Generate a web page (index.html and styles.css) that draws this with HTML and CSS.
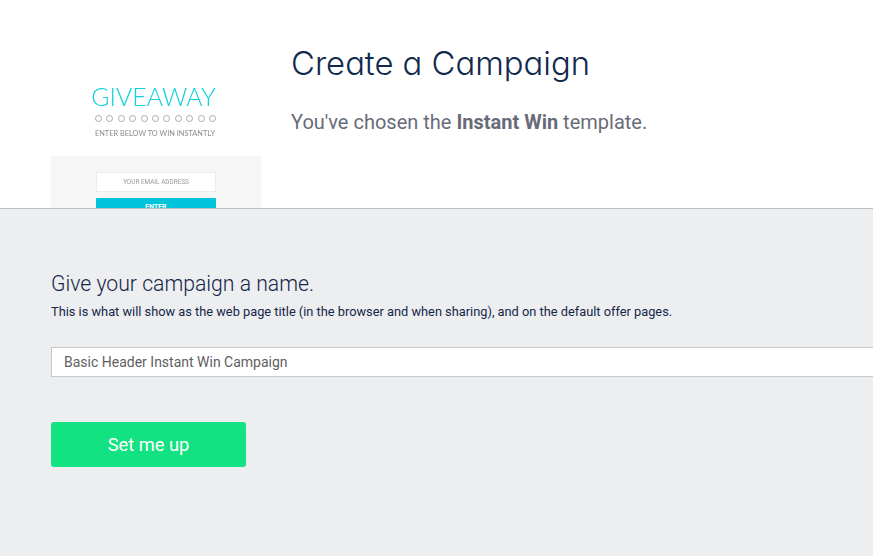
FILE: index.html
```html
<!DOCTYPE html>
<html lang="en">
<head>
    <meta charset="UTF-8">
    <meta name="viewport" content="width=device-width, initial-scale=1.0">
    <title>Create a Campaign</title>
    <link rel="stylesheet" href="styles.css">
</head>
<body>
    <div class="top-section">
        <div class="thumb">
            <div class="thumb-head">
                <div class="thumb-title">GIVEAWAY</div>
                <div class="thumb-dots">
                    <span></span><span></span><span></span><span></span><span></span><span></span>
                    <span></span><span></span><span></span><span></span><span></span>
                </div>
                <div class="thumb-sub">ENTER BELOW TO WIN INSTANTLY</div>
            </div>
            <div class="thumb-form">
                <div class="thumb-input">YOUR EMAIL ADDRESS</div>
                <div class="thumb-btn">ENTER</div>
            </div>
        </div>
        <div class="intro">
            <h1>Create a Campaign</h1>
            <p>You've chosen the <b>Instant Win</b> template.</p>
        </div>
    </div>
    <div class="form-section">
        <h2>Give your campaign a name.</h2>
        <p class="hint">This is what will show as the web page title (in the browser and when sharing), and on the default offer pages.</p>
        <input class="name-input" type="text" value="Basic Header Instant Win Campaign">
        <button class="main-btn">Set me up</button>
    </div>
</body>
</html>
```

FILE: styles.css
```css
html, body {
    height: 100%;
}
body {
    margin: 0;
    font-family: Roboto, Arial, sans-serif;
    background: #edeef0;
    overflow: hidden;
    display: flex;
    flex-direction: column;
}
.top-section {
    height: 208px;
    flex: none;
    background: #fff;
    border-bottom: 1px solid #bdbfc2;
    display: flex;
    padding-left: 51px;
    overflow: hidden;
}
.thumb {
    width: 210px;
    flex: none;
    margin-right: 30px;
    padding-top: 84px;
    filter: blur(0.3px);
}
.thumb-head {
    height: 72px;
    text-align: center;
}
.thumb-title {
    font-family: Lato, sans-serif;
    font-weight: 300;
    font-size: 24.8px;
    line-height: 26px;
    padding-right: 5px;
    color: #12cfdc;
}
.thumb-dots {
    display: flex;
    justify-content: center;
    gap: 4.4px;
    margin-top: 5px;
    padding-right: 1px;
}
.thumb-dots span {
    width: 7px;
    height: 7px;
    box-sizing: border-box;
    border: 0.7px solid #a9a9a9;
    border-radius: 50%;
}
.thumb-sub {
    font-family: Lato, sans-serif;
    font-size: 7.4px;
    line-height: 10px;
    color: #8a8a8a;
    margin-top: 7px;
    padding-right: 2px;
}
.thumb-form {
    background: #f6f6f6;
    padding-top: 16px;
    height: 60px;
}
.thumb-input {
    width: 118px;
    height: 18px;
    margin: 0 auto 6px;
    background: #fff;
    border: 1px solid #ececec;
    font-size: 6.4px;
    line-height: 18px;
    text-align: center;
    color: #999;
}
.thumb-btn {
    width: 120px;
    height: 30px;
    margin: 0 auto;
    background: #00c4dc;
    border-radius: 1px;
    font-size: 7px;
    font-weight: bold;
    line-height: 18px;
    text-align: center;
    color: #fff;
}
.intro {
    padding-top: 42px;
}
h1 {
    margin: 0;
    font-family: Inter, sans-serif;
    font-feature-settings: "cv11";
    font-weight: 300;
    font-size: 32.8px;
    line-height: 42px;
    color: #11294d;
}
.intro p {
    margin: 24px 0 0;
    font-size: 20px;
    line-height: 28px;
    color: #686c78;
}
.form-section {
    flex: 1;
    padding: 60px 0 0 51px;
}
h2 {
    margin: 0;
    font-weight: 300;
    font-size: 21.2px;
    line-height: 30px;
    color: #14264a;
}
.hint {
    margin: 4px 0 0;
    font-size: 12.8px;
    line-height: 18px;
    color: #14264a;
}
.name-input {
    display: block;
    width: 900px;
    height: 30px;
    box-sizing: border-box;
    margin-top: 26px;
    padding: 0 12px;
    background: #fff;
    border: 1px solid #c8c9cb;
    font-family: Roboto, Arial, sans-serif;
    font-size: 14px;
    color: #5f5f5f;
}
.main-btn {
    display: block;
    width: 195px;
    height: 45px;
    margin-top: 45px;
    background: #12e281;
    color: #fff;
    border: none;
    border-radius: 3px;
    font-family: Roboto, Arial, sans-serif;
    font-size: 18.3px;
}
```
